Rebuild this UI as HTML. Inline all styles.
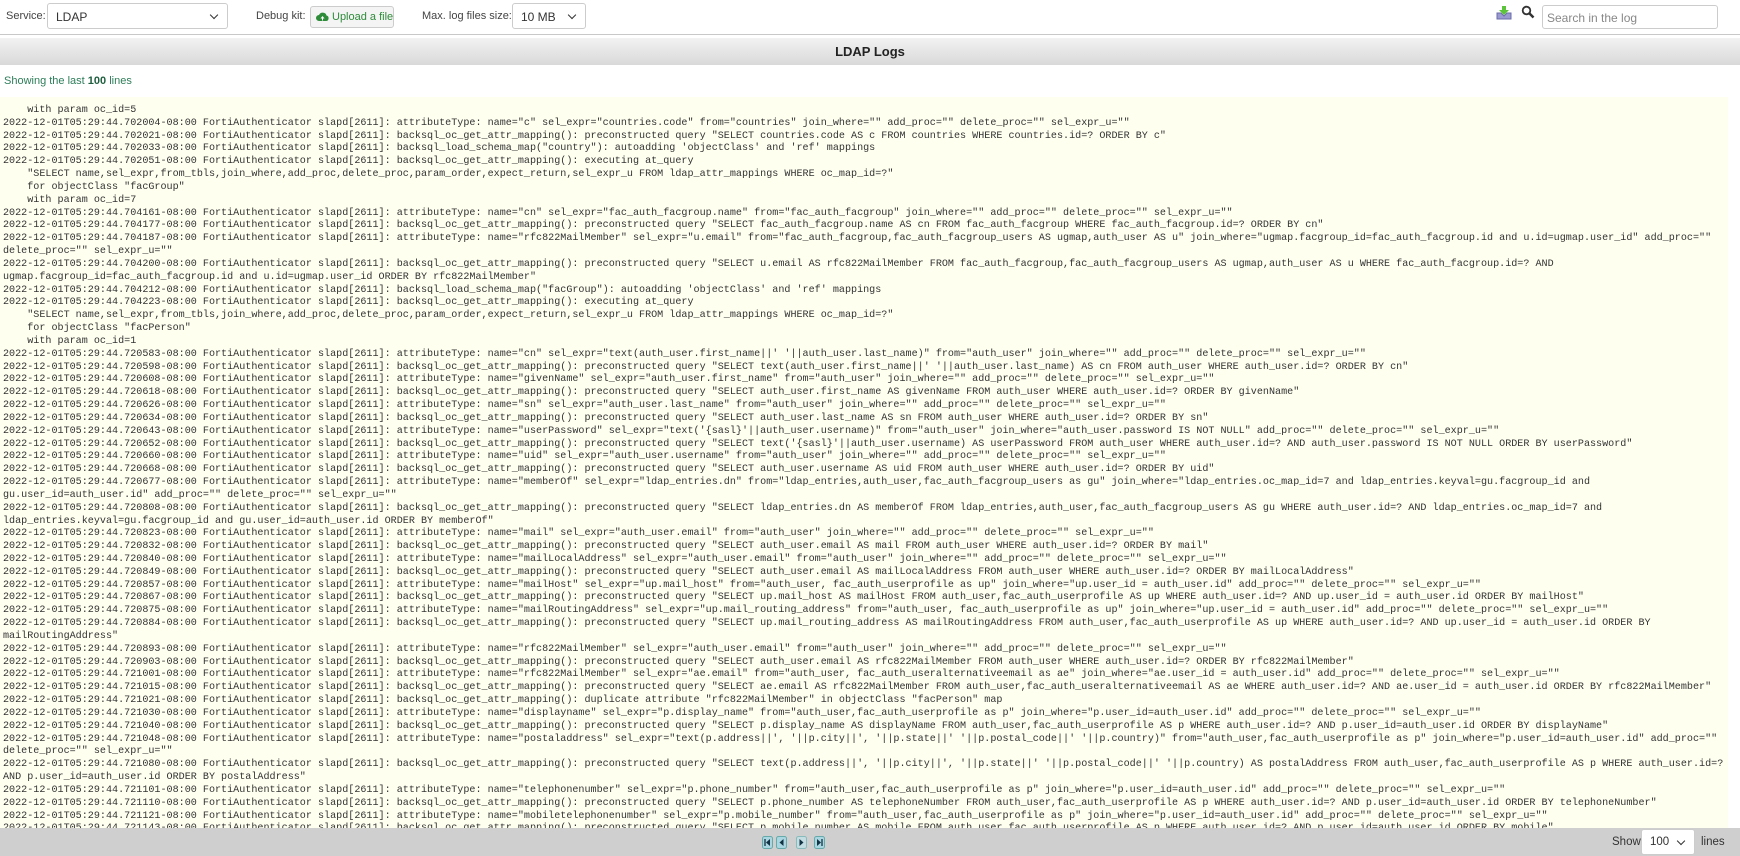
<!DOCTYPE html>
<html><head><meta charset="utf-8"><style>
*{box-sizing:border-box;margin:0;padding:0}
body{width:1740px;height:856px;overflow:hidden;background:#fff;font-family:"Liberation Sans",sans-serif;font-size:12px;color:#333;position:relative}
.top{position:absolute;left:0;top:0;width:1740px;height:35px;border-bottom:1px solid #c8c8c8}
.lbl{position:absolute;top:10px;font-size:11px;color:#444;white-space:nowrap}
.sel{position:absolute;top:3px;height:26px;border:1px solid #ccc;border-radius:3px;background:#fff;font-size:12px;padding:6px 8px;color:#333;white-space:nowrap}
.sel:after{content:"";position:absolute;right:10px;top:8px;width:5px;height:5px;border-right:1.5px solid #333;border-bottom:1.5px solid #333;transform:rotate(45deg)}
.inp{position:absolute;left:1542px;top:5px;width:176px;height:24px;border:1px solid #ccc;border-radius:3px;color:#888;font-size:12px;padding:5px 4px}
.btn{position:absolute;top:6px;left:310px;width:84px;height:22px;border:1px solid #ccc;border-radius:3px;background:#f4f4f4;color:#2e8b3a;font-size:11px;padding:4px 0 0 21px;white-space:nowrap}
.title{position:absolute;left:0;top:38px;width:1740px;height:27px;background:linear-gradient(#f2f2f2,#d9d9d9);text-align:center;font-weight:bold;font-size:13px;line-height:27px;color:#222}
.show{position:absolute;left:4px;top:75px;font-size:11px;color:#2e7d5a}
.log{position:absolute;left:0;top:97px;width:1728px;height:731px;background:#fffff0;overflow:hidden;padding:8px 0 0 3px;font-family:"Liberation Mono",monospace;font-size:10.1px;line-height:12.83px;color:#333;white-space:pre}
.foot{position:absolute;left:0;top:828px;width:1740px;height:28px;background:#cfcfcf}
.pg{position:absolute;top:8px}
</style></head><body>
<div class="top">
<div class="lbl" style="left:6px">Service:</div>
<div class="sel" style="left:47px;width:181px">LDAP</div>
<div class="lbl" style="left:256px">Debug kit:</div>
<div class="btn"><svg style="position:absolute;left:5px;top:4px" width="13" height="12" viewBox="0 0 13 12"><path d="M3 10 A3 3 0 0 1 3 4 A4 4 0 0 1 10.5 4.5 A2.8 2.8 0 0 1 10 10Z" fill="#2e8b3a"/><path d="M6.5 5 L4.5 7.5 H6 V9.5 H7 V7.5 H8.5Z" fill="#fff"/></svg>Upload a file</div>
<div class="lbl" style="left:422px">Max. log files size:</div>
<div class="sel" style="left:512px;width:74px">10 MB</div>
<svg style="position:absolute;left:1496px;top:5px" width="16" height="15" viewBox="0 0 16 15"><path d="M1 8 H5 L8 11 L11 8 H15 V14 H1Z" fill="#9a9ad0" stroke="#6b6ba8"/><path d="M6 1 H10 V5 H13 L8 10 L3 5 H6Z" fill="#5cc43a"/></svg>
<svg style="position:absolute;left:1521px;top:5px" width="14" height="14" viewBox="0 0 14 14"><circle cx="5.5" cy="5.5" r="3.8" fill="none" stroke="#333" stroke-width="1.8"/><path d="M8.3 8.3 L12.5 12.5" stroke="#333" stroke-width="2.5"/></svg>
<div class="inp">Search in the log</div>
</div>
<div class="title">LDAP Logs</div>
<div class="show">Showing the last <b style="color:#1f5f3f">100</b> lines</div>
<div class="log">    with param oc_id=5
2022-12-01T05:29:44.702004-08:00 FortiAuthenticator slapd[2611]: attributeType: name="c" sel_expr="countries.code" from="countries" join_where="" add_proc="" delete_proc="" sel_expr_u=""
2022-12-01T05:29:44.702021-08:00 FortiAuthenticator slapd[2611]: backsql_oc_get_attr_mapping(): preconstructed query "SELECT countries.code AS c FROM countries WHERE countries.id=? ORDER BY c"
2022-12-01T05:29:44.702033-08:00 FortiAuthenticator slapd[2611]: backsql_load_schema_map("country"): autoadding 'objectClass' and 'ref' mappings
2022-12-01T05:29:44.702051-08:00 FortiAuthenticator slapd[2611]: backsql_oc_get_attr_mapping(): executing at_query
    "SELECT name,sel_expr,from_tbls,join_where,add_proc,delete_proc,param_order,expect_return,sel_expr_u FROM ldap_attr_mappings WHERE oc_map_id=?"
    for objectClass "facGroup"
    with param oc_id=7
2022-12-01T05:29:44.704161-08:00 FortiAuthenticator slapd[2611]: attributeType: name="cn" sel_expr="fac_auth_facgroup.name" from="fac_auth_facgroup" join_where="" add_proc="" delete_proc="" sel_expr_u=""
2022-12-01T05:29:44.704177-08:00 FortiAuthenticator slapd[2611]: backsql_oc_get_attr_mapping(): preconstructed query "SELECT fac_auth_facgroup.name AS cn FROM fac_auth_facgroup WHERE fac_auth_facgroup.id=? ORDER BY cn"
2022-12-01T05:29:44.704187-08:00 FortiAuthenticator slapd[2611]: attributeType: name="rfc822MailMember" sel_expr="u.email" from="fac_auth_facgroup,fac_auth_facgroup_users AS ugmap,auth_user AS u" join_where="ugmap.facgroup_id=fac_auth_facgroup.id and u.id=ugmap.user_id" add_proc=""
delete_proc="" sel_expr_u=""
2022-12-01T05:29:44.704200-08:00 FortiAuthenticator slapd[2611]: backsql_oc_get_attr_mapping(): preconstructed query "SELECT u.email AS rfc822MailMember FROM fac_auth_facgroup,fac_auth_facgroup_users AS ugmap,auth_user AS u WHERE fac_auth_facgroup.id=? AND
ugmap.facgroup_id=fac_auth_facgroup.id and u.id=ugmap.user_id ORDER BY rfc822MailMember"
2022-12-01T05:29:44.704212-08:00 FortiAuthenticator slapd[2611]: backsql_load_schema_map("facGroup"): autoadding 'objectClass' and 'ref' mappings
2022-12-01T05:29:44.704223-08:00 FortiAuthenticator slapd[2611]: backsql_oc_get_attr_mapping(): executing at_query
    "SELECT name,sel_expr,from_tbls,join_where,add_proc,delete_proc,param_order,expect_return,sel_expr_u FROM ldap_attr_mappings WHERE oc_map_id=?"
    for objectClass "facPerson"
    with param oc_id=1
2022-12-01T05:29:44.720583-08:00 FortiAuthenticator slapd[2611]: attributeType: name="cn" sel_expr="text(auth_user.first_name||' '||auth_user.last_name)" from="auth_user" join_where="" add_proc="" delete_proc="" sel_expr_u=""
2022-12-01T05:29:44.720598-08:00 FortiAuthenticator slapd[2611]: backsql_oc_get_attr_mapping(): preconstructed query "SELECT text(auth_user.first_name||' '||auth_user.last_name) AS cn FROM auth_user WHERE auth_user.id=? ORDER BY cn"
2022-12-01T05:29:44.720608-08:00 FortiAuthenticator slapd[2611]: attributeType: name="givenName" sel_expr="auth_user.first_name" from="auth_user" join_where="" add_proc="" delete_proc="" sel_expr_u=""
2022-12-01T05:29:44.720618-08:00 FortiAuthenticator slapd[2611]: backsql_oc_get_attr_mapping(): preconstructed query "SELECT auth_user.first_name AS givenName FROM auth_user WHERE auth_user.id=? ORDER BY givenName"
2022-12-01T05:29:44.720626-08:00 FortiAuthenticator slapd[2611]: attributeType: name="sn" sel_expr="auth_user.last_name" from="auth_user" join_where="" add_proc="" delete_proc="" sel_expr_u=""
2022-12-01T05:29:44.720634-08:00 FortiAuthenticator slapd[2611]: backsql_oc_get_attr_mapping(): preconstructed query "SELECT auth_user.last_name AS sn FROM auth_user WHERE auth_user.id=? ORDER BY sn"
2022-12-01T05:29:44.720643-08:00 FortiAuthenticator slapd[2611]: attributeType: name="userPassword" sel_expr="text('{sasl}'||auth_user.username)" from="auth_user" join_where="auth_user.password IS NOT NULL" add_proc="" delete_proc="" sel_expr_u=""
2022-12-01T05:29:44.720652-08:00 FortiAuthenticator slapd[2611]: backsql_oc_get_attr_mapping(): preconstructed query "SELECT text('{sasl}'||auth_user.username) AS userPassword FROM auth_user WHERE auth_user.id=? AND auth_user.password IS NOT NULL ORDER BY userPassword"
2022-12-01T05:29:44.720660-08:00 FortiAuthenticator slapd[2611]: attributeType: name="uid" sel_expr="auth_user.username" from="auth_user" join_where="" add_proc="" delete_proc="" sel_expr_u=""
2022-12-01T05:29:44.720668-08:00 FortiAuthenticator slapd[2611]: backsql_oc_get_attr_mapping(): preconstructed query "SELECT auth_user.username AS uid FROM auth_user WHERE auth_user.id=? ORDER BY uid"
2022-12-01T05:29:44.720677-08:00 FortiAuthenticator slapd[2611]: attributeType: name="memberOf" sel_expr="ldap_entries.dn" from="ldap_entries,auth_user,fac_auth_facgroup_users as gu" join_where="ldap_entries.oc_map_id=7 and ldap_entries.keyval=gu.facgroup_id and
gu.user_id=auth_user.id" add_proc="" delete_proc="" sel_expr_u=""
2022-12-01T05:29:44.720808-08:00 FortiAuthenticator slapd[2611]: backsql_oc_get_attr_mapping(): preconstructed query "SELECT ldap_entries.dn AS memberOf FROM ldap_entries,auth_user,fac_auth_facgroup_users AS gu WHERE auth_user.id=? AND ldap_entries.oc_map_id=7 and
ldap_entries.keyval=gu.facgroup_id and gu.user_id=auth_user.id ORDER BY memberOf"
2022-12-01T05:29:44.720823-08:00 FortiAuthenticator slapd[2611]: attributeType: name="mail" sel_expr="auth_user.email" from="auth_user" join_where="" add_proc="" delete_proc="" sel_expr_u=""
2022-12-01T05:29:44.720832-08:00 FortiAuthenticator slapd[2611]: backsql_oc_get_attr_mapping(): preconstructed query "SELECT auth_user.email AS mail FROM auth_user WHERE auth_user.id=? ORDER BY mail"
2022-12-01T05:29:44.720840-08:00 FortiAuthenticator slapd[2611]: attributeType: name="mailLocalAddress" sel_expr="auth_user.email" from="auth_user" join_where="" add_proc="" delete_proc="" sel_expr_u=""
2022-12-01T05:29:44.720849-08:00 FortiAuthenticator slapd[2611]: backsql_oc_get_attr_mapping(): preconstructed query "SELECT auth_user.email AS mailLocalAddress FROM auth_user WHERE auth_user.id=? ORDER BY mailLocalAddress"
2022-12-01T05:29:44.720857-08:00 FortiAuthenticator slapd[2611]: attributeType: name="mailHost" sel_expr="up.mail_host" from="auth_user, fac_auth_userprofile as up" join_where="up.user_id = auth_user.id" add_proc="" delete_proc="" sel_expr_u=""
2022-12-01T05:29:44.720867-08:00 FortiAuthenticator slapd[2611]: backsql_oc_get_attr_mapping(): preconstructed query "SELECT up.mail_host AS mailHost FROM auth_user,fac_auth_userprofile AS up WHERE auth_user.id=? AND up.user_id = auth_user.id ORDER BY mailHost"
2022-12-01T05:29:44.720875-08:00 FortiAuthenticator slapd[2611]: attributeType: name="mailRoutingAddress" sel_expr="up.mail_routing_address" from="auth_user, fac_auth_userprofile as up" join_where="up.user_id = auth_user.id" add_proc="" delete_proc="" sel_expr_u=""
2022-12-01T05:29:44.720884-08:00 FortiAuthenticator slapd[2611]: backsql_oc_get_attr_mapping(): preconstructed query "SELECT up.mail_routing_address AS mailRoutingAddress FROM auth_user,fac_auth_userprofile AS up WHERE auth_user.id=? AND up.user_id = auth_user.id ORDER BY
mailRoutingAddress"
2022-12-01T05:29:44.720893-08:00 FortiAuthenticator slapd[2611]: attributeType: name="rfc822MailMember" sel_expr="auth_user.email" from="auth_user" join_where="" add_proc="" delete_proc="" sel_expr_u=""
2022-12-01T05:29:44.720903-08:00 FortiAuthenticator slapd[2611]: backsql_oc_get_attr_mapping(): preconstructed query "SELECT auth_user.email AS rfc822MailMember FROM auth_user WHERE auth_user.id=? ORDER BY rfc822MailMember"
2022-12-01T05:29:44.721001-08:00 FortiAuthenticator slapd[2611]: attributeType: name="rfc822MailMember" sel_expr="ae.email" from="auth_user, fac_auth_useralternativeemail as ae" join_where="ae.user_id = auth_user.id" add_proc="" delete_proc="" sel_expr_u=""
2022-12-01T05:29:44.721015-08:00 FortiAuthenticator slapd[2611]: backsql_oc_get_attr_mapping(): preconstructed query "SELECT ae.email AS rfc822MailMember FROM auth_user,fac_auth_useralternativeemail AS ae WHERE auth_user.id=? AND ae.user_id = auth_user.id ORDER BY rfc822MailMember"
2022-12-01T05:29:44.721021-08:00 FortiAuthenticator slapd[2611]: backsql_oc_get_attr_mapping(): duplicate attribute "rfc822MailMember" in objectClass "facPerson" map
2022-12-01T05:29:44.721030-08:00 FortiAuthenticator slapd[2611]: attributeType: name="displayname" sel_expr="p.display_name" from="auth_user,fac_auth_userprofile as p" join_where="p.user_id=auth_user.id" add_proc="" delete_proc="" sel_expr_u=""
2022-12-01T05:29:44.721040-08:00 FortiAuthenticator slapd[2611]: backsql_oc_get_attr_mapping(): preconstructed query "SELECT p.display_name AS displayName FROM auth_user,fac_auth_userprofile AS p WHERE auth_user.id=? AND p.user_id=auth_user.id ORDER BY displayName"
2022-12-01T05:29:44.721048-08:00 FortiAuthenticator slapd[2611]: attributeType: name="postaladdress" sel_expr="text(p.address||', '||p.city||', '||p.state||' '||p.postal_code||' '||p.country)" from="auth_user,fac_auth_userprofile as p" join_where="p.user_id=auth_user.id" add_proc=""
delete_proc="" sel_expr_u=""
2022-12-01T05:29:44.721080-08:00 FortiAuthenticator slapd[2611]: backsql_oc_get_attr_mapping(): preconstructed query "SELECT text(p.address||', '||p.city||', '||p.state||' '||p.postal_code||' '||p.country) AS postalAddress FROM auth_user,fac_auth_userprofile AS p WHERE auth_user.id=?
AND p.user_id=auth_user.id ORDER BY postalAddress"
2022-12-01T05:29:44.721101-08:00 FortiAuthenticator slapd[2611]: attributeType: name="telephonenumber" sel_expr="p.phone_number" from="auth_user,fac_auth_userprofile as p" join_where="p.user_id=auth_user.id" add_proc="" delete_proc="" sel_expr_u=""
2022-12-01T05:29:44.721110-08:00 FortiAuthenticator slapd[2611]: backsql_oc_get_attr_mapping(): preconstructed query "SELECT p.phone_number AS telephoneNumber FROM auth_user,fac_auth_userprofile AS p WHERE auth_user.id=? AND p.user_id=auth_user.id ORDER BY telephoneNumber"
2022-12-01T05:29:44.721121-08:00 FortiAuthenticator slapd[2611]: attributeType: name="mobiletelephonenumber" sel_expr="p.mobile_number" from="auth_user,fac_auth_userprofile as p" join_where="p.user_id=auth_user.id" add_proc="" delete_proc="" sel_expr_u=""
2022-12-01T05:29:44.721143-08:00 FortiAuthenticator slapd[2611]: backsql_oc_get_attr_mapping(): preconstructed query "SELECT p.mobile_number AS mobile FROM auth_user,fac_auth_userprofile AS p WHERE auth_user.id=? AND p.user_id=auth_user.id ORDER BY mobile"
</div>
<div class="foot">
<svg class="pg" style="left:762px" width="11" height="13" viewBox="0 0 11 13"><rect x=".5" y=".5" width="10" height="12" rx="2" fill="#a9d6e0" stroke="#6aa"/><path d="M3 3V10" stroke="#134" stroke-width="1.3"/><path d="M8 3L4 6.5 8 10Z" fill="#134"/></svg>
<svg class="pg" style="left:776px" width="11" height="13" viewBox="0 0 11 13"><rect x=".5" y=".5" width="10" height="12" rx="2" fill="#a9d6e0" stroke="#6aa"/><path d="M7.5 3L3.5 6.5 7.5 10Z" fill="#134"/></svg>
<svg class="pg" style="left:796px" width="11" height="13" viewBox="0 0 11 13"><rect x=".5" y=".5" width="10" height="12" rx="2" fill="#c4dde2" stroke="#8bb"/><path d="M3.5 3L7.5 6.5 3.5 10Z" fill="#134"/></svg>
<svg class="pg" style="left:814px" width="11" height="13" viewBox="0 0 11 13"><rect x=".5" y=".5" width="10" height="12" rx="2" fill="#a9d6e0" stroke="#6aa"/><path d="M3 3L7 6.5 3 10Z" fill="#134"/><path d="M8 3V10" stroke="#134" stroke-width="1.3"/></svg>
<div style="position:absolute;left:1612px;top:8px;font-size:11.5px;color:#333">Show</div>
<div class="sel" style="left:1641px;width:54px;top:1px;font-size:11.5px">100</div>
<div style="position:absolute;left:1701px;top:8px;font-size:11.5px;color:#333">lines</div>
</div>
</body></html>
